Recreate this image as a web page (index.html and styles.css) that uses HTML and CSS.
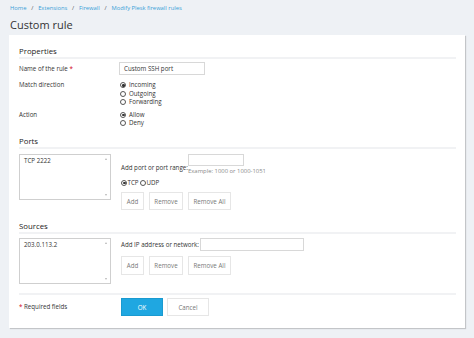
FILE: index.html
```html
<!DOCTYPE html>
<html>
<head>
<meta charset="utf-8">
<link rel="stylesheet" href="styles.css">
</head>
<body>
<div class="page">
  <nav class="crumbs">
    <a>Home</a><span class="sep">/</span><a>Extensions</a><span class="sep">/</span><a>Firewall</a><span class="sep">/</span><a>Modify Plesk firewall rules</a>
  </nav>
  <h1 class="title">Custom rule</h1>
  <div class="card">
    <h2 class="section first">Properties</h2>
    <div class="row first-row">
      <div class="label">Name of the rule <span class="req">*</span></div>
      <div class="field"><div class="input name">Custom SSH port</div></div>
    </div>
    <div class="row">
      <div class="label radlabel">Match direction</div>
      <div class="field radios">
        <label class="radio"><span class="dot on"></span>Incoming</label>
        <label class="radio"><span class="dot"></span>Outgoing</label>
        <label class="radio"><span class="dot"></span>Forwarding</label>
      </div>
    </div>
    <div class="row">
      <div class="label radlabel">Action</div>
      <div class="field radios">
        <label class="radio"><span class="dot on"></span>Allow</label>
        <label class="radio"><span class="dot"></span>Deny</label>
      </div>
    </div>

    <h2 class="section ports">Ports</h2>
    <div class="row list-row">
      <div class="listbox"><span>TCP 2222</span><div class="sb"><span class="up"></span><span class="down"></span></div></div>
      <div class="side">
        <div class="addline ports-add">
          <span class="addlabel">Add port or port range:</span>
          <div class="addfield">
            <div class="input small"></div>
            <div class="hint">Example: 1000 or 1000-1051</div>
          </div>
        </div>
        <div class="proto">
          <label class="radio"><span class="dot on"></span>TCP</label>
          <label class="radio"><span class="dot"></span>UDP</label>
        </div>
        <div class="btns">
          <span class="btn add">Add</span><span class="btn rem">Remove</span><span class="btn remall">Remove All</span>
        </div>
      </div>
    </div>

    <h2 class="section sources">Sources</h2>
    <div class="row list-row">
      <div class="listbox"><span>203.0.113.2</span><div class="sb"><span class="up"></span><span class="down"></span></div></div>
      <div class="side">
        <div class="addline">
          <span class="addlabel ip">Add IP address or network:</span>
          <div class="input wide"></div>
        </div>
        <div class="btns">
          <span class="btn add">Add</span><span class="btn rem">Remove</span><span class="btn remall">Remove All</span>
        </div>
      </div>
    </div>

    <div class="footer">
      <div class="label"><span class="req">*</span> Required fields</div>
      <div class="actions">
        <span class="btn ok">OK</span><span class="btn cancel">Cancel</span>
      </div>
    </div>
  </div>
</div>
</body>
</html>
```
FILE: styles.css
```css
* { box-sizing: border-box; }
html, body { margin: 0; padding: 0; }
body {
  background: #eef1f5;
  font-family: "Open Sans", "Noto Sans", sans-serif;
  font-size: 6.2px;
  color: #333;
  width: 474px;
  height: 338px;
  overflow: hidden;
}
.page { padding: 4px 9px 0 9px; }
.crumbs { font-size: 5.8px; color: #3a9fd8; padding-left: 1px; height: 9px; line-height: 9px; }
.crumbs a { color: #3a9fd8; }
.crumbs .sep { color: #555; margin: 0 4.8px; }
.title {
  margin: 5px 0 0 1px;
  font-size: 11px;
  font-weight: 400;
  color: #333;
  line-height: 14px;
  height: 14px;
}
.card {
  margin-top: 3px;
  width: 456px;
  height: 293px;
  background: #fff;
  box-shadow: 1px 1px 1px rgba(0,0,0,0.18);
  padding: 11px 9px 0 10px;
}
.section {
  font-size: 7.8px;
  font-weight: 400;
  color: #222;
  margin: 0 0 5px 0;
  line-height: 12px;
  height: 14px;
  border-bottom: 2px solid #f1f2f4;
}
.section.first { line-height: 11px; height: 13px; }
.section.ports { margin-top: 8px; line-height: 11px; height: 13px; margin-bottom: 5px; }
.section.sources { margin-top: 11px; line-height: 11px; height: 13px; margin-bottom: 4px; }
.row { display: flex; margin-bottom: 4px; }
.row.first-row { margin-bottom: 6px; margin-top: 1px; }
.label { width: 101px; flex: none; line-height: 10px; color: #333; }
.radlabel { line-height: 8.5px; }
.req { color: #d0021b; }
.field { line-height: 10px; }
.input {
  border: 1px solid #d8d8d8;
  background: #fff;
  height: 13px;
  line-height: 11px;
  padding: 0 4px;
}
.input.name { width: 86px; margin-left: -1px; margin-top: -2px; }
.radios { display: flex; flex-direction: column; }
.radio { display: flex; align-items: center; line-height: 8.5px; height: 8.5px; }
.dot {
  width: 6px; height: 6px; border: 0.8px solid #555; border-radius: 50%;
  margin-right: 3px; position: relative; flex: none; background: #fff;
}
.dot.on::after {
  content: ""; position: absolute; left: 1.2px; top: 1.2px; width: 2.4px; height: 2.4px;
  background: #333; border-radius: 50%;
}
.list-row { margin-bottom: 0; }
.listbox {
  width: 92px; height: 46px; flex: none;
  border: 1px solid #cfcfcf; position: relative; padding: 2px 4px; margin-right: 10px;
  line-height: 8px;
}
.sb { position: absolute; right: 0; top: 0; bottom: 0; width: 7px; }
.sb .up, .sb .down {
  position: absolute; left: 2px; width: 0; height: 0;
  border-left: 1.5px solid transparent; border-right: 1.5px solid transparent;
}
.sb .up { top: 3px; border-bottom: 2px solid #b5b5b5; }
.sb .down { bottom: 3px; border-top: 2px solid #b5b5b5; }
.side { display: flex; flex-direction: column; }
.addline { display: flex; align-items: flex-start; }
.addlabel { line-height: 8px; width: 67px; }
.ports-add .addlabel { margin-top: 10px; }
.addlabel.ip { width: 79px; margin-top: 3px; }
.input.wide { width: 104px; margin-top: 0; }
.addfield { display: flex; flex-direction: column; }
.input.small { width: 56px; height: 12px; }
.hint { color: #8a8a8a; font-size: 5.9px; line-height: 8px; margin-top: 1px; }
.proto { display: flex; margin-top: 4px; }
.proto .radio { margin-right: 1.5px; }
.proto .dot { margin-right: 0.5px; }
.btns { display: flex; gap: 5px; margin-top: 5px; }
.btn {
  display: inline-flex; align-items: center; justify-content: center;
  border: 1px solid #e6e6e6; background: #fff; color: #777;
  height: 18px; padding: 0;
}
.sources + .list-row .btns .btn { height: 19px; }
.btn.add { width: 23px; }
.btn.rem { width: 34px; }
.btn.remall { width: 43px; }
.footer {
  display: flex; align-items: center;
  border-top: 2px solid #f1f2f4;
  margin-top: 9px; padding-top: 3px;
}
.actions { display: flex; gap: 4px; margin-left: 1px; }
.btn.ok { background: #1fa7e1; color: #fff; border-color: #1a9ad0; width: 42px; }
.btn.cancel { width: 42px; }
```
